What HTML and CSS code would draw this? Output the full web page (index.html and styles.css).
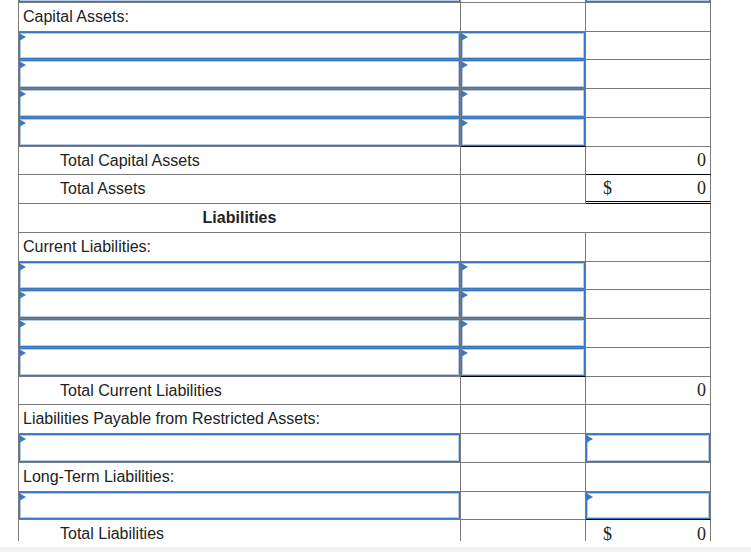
FILE: index.html
```html
<!DOCTYPE html>
<html lang="en">
<head>
<meta charset="utf-8">
<title>Balance Sheet</title>
<link rel="stylesheet" href="styles.css">
</head>
<body>
<div class="sheet">
  <div class="grid">
    <!-- partial row above -->
    <div class="c in"><div class="box"></div></div>
    <div class="c"></div>
    <div class="c in"><div class="box"></div></div>

    <div class="c">Capital Assets:</div>
    <div class="c"></div>
    <div class="c"></div>

    <div class="c in"><div class="box"></div></div>
    <div class="c in"><div class="box"></div></div>
    <div class="c"></div>

    <div class="c in"><div class="box"></div></div>
    <div class="c in"><div class="box"></div></div>
    <div class="c"></div>

    <div class="c in"><div class="box"></div></div>
    <div class="c in"><div class="box"></div></div>
    <div class="c"></div>

    <div class="c in"><div class="box"></div></div>
    <div class="c in sub"><div class="box"></div></div>
    <div class="c"></div>

    <div class="c indent">Total Capital Assets</div>
    <div class="c"></div>
    <div class="c num end sub"><span>0</span></div>

    <div class="c indent">Total Assets</div>
    <div class="c"></div>
    <div class="c num dbl"><span>$</span><span>0</span></div>

    <div class="c head">Liabilities</div>
    <div class="c span2"></div>

    <div class="c">Current Liabilities:</div>
    <div class="c"></div>
    <div class="c"></div>

    <div class="c in"><div class="box"></div></div>
    <div class="c in"><div class="box"></div></div>
    <div class="c"></div>

    <div class="c in"><div class="box"></div></div>
    <div class="c in"><div class="box"></div></div>
    <div class="c"></div>

    <div class="c in"><div class="box"></div></div>
    <div class="c in"><div class="box"></div></div>
    <div class="c"></div>

    <div class="c in"><div class="box"></div></div>
    <div class="c in sub"><div class="box"></div></div>
    <div class="c"></div>

    <div class="c indent">Total Current Liabilities</div>
    <div class="c"></div>
    <div class="c num end"><span>0</span></div>

    <div class="c">Liabilities Payable from Restricted Assets:</div>
    <div class="c"></div>
    <div class="c"></div>

    <div class="c in"><div class="box"></div></div>
    <div class="c"></div>
    <div class="c in"><div class="box"></div></div>

    <div class="c">Long-Term Liabilities:</div>
    <div class="c"></div>
    <div class="c"></div>

    <div class="c in"><div class="box"></div></div>
    <div class="c"></div>
    <div class="c in sub"><div class="box"></div></div>

    <div class="c indent">Total Liabilities</div>
    <div class="c"></div>
    <div class="c num"><span>$</span><span>0</span></div>
  </div>
</div>
<div class="gap"></div>
<div class="foot"></div>
</body>
</html>
```
FILE: styles.css
```css
html, body {
  margin: 0;
  padding: 0;
  background: #ffffff;
}

.sheet {
  height: 541px;
  overflow: hidden;
  padding-left: 18px;
}

.grid {
  display: grid;
  grid-template-columns: 442px 125px 125px;
  grid-auto-rows: 28.75px;
  margin-top: -25.8px;
  border-left: 1px solid #7a7a7a;
  width: max-content;
}

.c {
  display: flex;
  align-items: center;
  min-width: 0;
  padding: 0 4px;
  border-right: 1px solid #7a7a7a;
  border-bottom: 1px solid #7a7a7a;
  font-family: "Liberation Sans", Arial, sans-serif;
  font-size: 16px;
  color: #222222;
  white-space: nowrap;
}

.c.indent {
  padding-left: 41px;
}

.c.head {
  justify-content: center;
  font-weight: bold;
}

.c.span2 {
  grid-column: span 2;
}

.c.in {
  padding: 0;
  align-items: stretch;
}

.box {
  flex: 1;
  position: relative;
  border: 1px solid #3d77c2;
  box-shadow: inset 0 0 0 1px #b2cced;
}

.box::before {
  content: "";
  position: absolute;
  left: -1px;
  top: 0;
  width: 0;
  height: 0;
  border-left: 7px solid #3d77c2;
  border-top: 4px solid transparent;
  border-bottom: 4px solid transparent;
}

.c.num {
  justify-content: space-between;
  padding: 0 4px 0 17px;
  font-family: "Liberation Serif", "Times New Roman", serif;
  font-size: 18px;
  color: #222222;
}

.c.num.end {
  justify-content: flex-end;
}

.c.sub {
  border-bottom-color: #000000;
}

.c.dbl {
  border-bottom: 3px double #000000;
}

.gap {
  height: 6px;
}

.foot {
  height: 5px;
  background: #f3f3f3;
}
```
